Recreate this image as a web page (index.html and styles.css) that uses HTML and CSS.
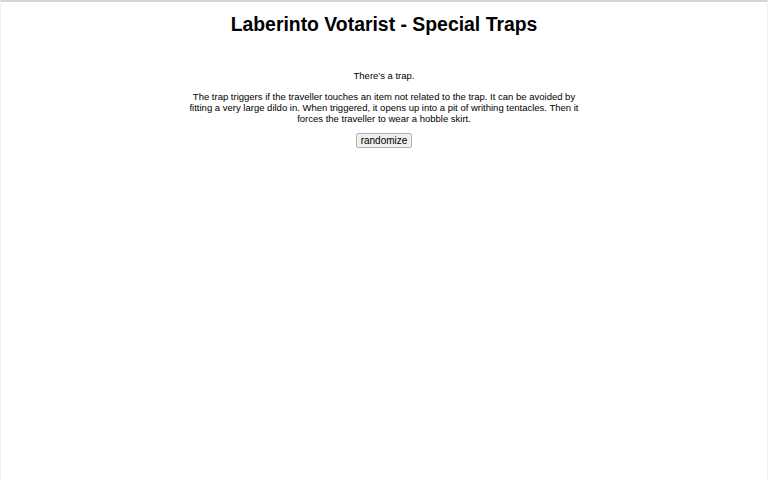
FILE: index.html
```html
<!DOCTYPE html>
<html lang="en">
<head>
    <meta charset="UTF-8">
    <meta name="viewport" content="width=device-width, initial-scale=1.0">
    <title>Laberinto Votarist - Special Traps</title>
    <link rel="stylesheet" href="styles.css">
</head>
<body>
    <div class="page">
        <h1>Laberinto Votarist - Special Traps</h1>

        <div class="trap">
            <p class="intro">There's a trap.</p>
            <p class="details" id="trapDetails">The trap triggers if the traveller touches an item not related to the trap. It can be avoided by fitting a very large dildo in. When triggered, it opens up into a pit of writhing tentacles. Then it forces the traveller to wear a hobble skirt.</p>
            <button class="randomize" type="button">randomize</button>
        </div>
    </div>
</body>
</html>
```

FILE: styles.css
```css
* {
    margin: 0;
    padding: 0;
    box-sizing: border-box;
}

body {
    font-family: 'Liberation Sans', Arial, sans-serif;
    color: #000;
    background: #fff;
}

.page {
    min-height: 100vh;
    border-top: 2px solid #d6d6d6;
    border-left: 1px solid #f2f2f2;
    border-right: 1px solid #f2f2f2;
    padding-top: 11px;
    text-align: center;
}

h1 {
    font-size: 19.4px;
    font-weight: bold;
    margin-bottom: 34px;
}

.trap {
    max-width: 400px;
    margin: 0 auto;
    font-size: 9.5px;
    line-height: 11px;
}

.intro {
    margin-bottom: 10px;
}

.details {
    margin-bottom: 9px;
}

.randomize {
    font-family: 'Liberation Sans', Arial, sans-serif;
    font-size: 10px;
    padding: 1px 4px;
    background: #efefef;
    border: 1px solid #b0b0b0;
    border-radius: 2px;
    color: #000;
}
```
